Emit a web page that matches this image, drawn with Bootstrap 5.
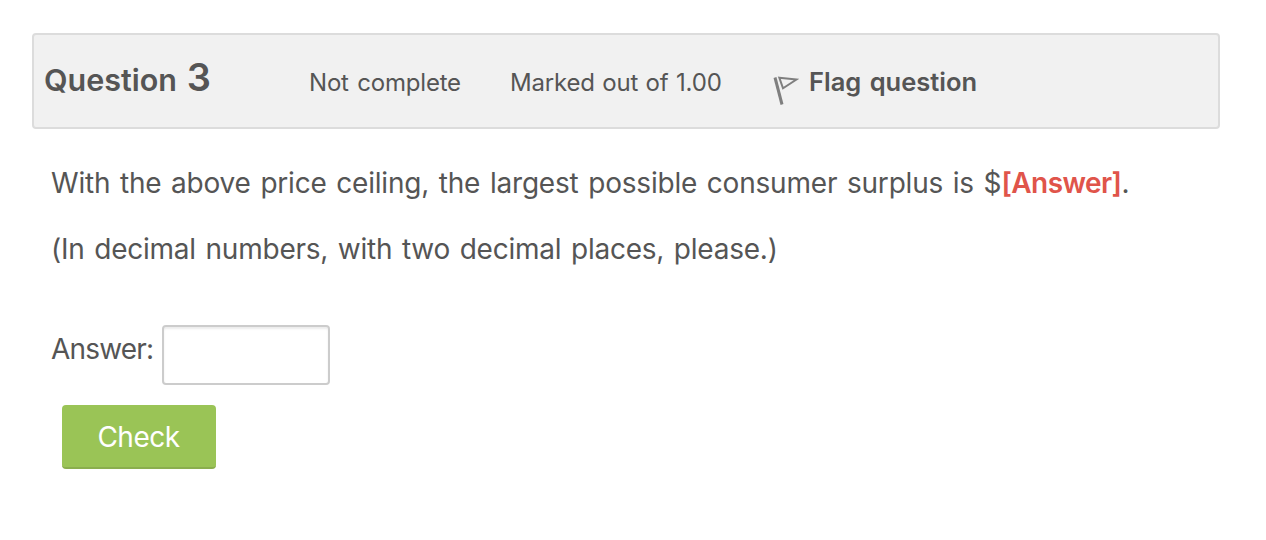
<!DOCTYPE html>
<html lang="en">
<head>
    <meta charset="UTF-8">
    <meta name="viewport" content="width=device-width, initial-scale=1.0">
    <title>Question 3</title>
    <link rel="stylesheet" href="https://cdn.jsdelivr.net/npm/bootstrap@5.3.0/dist/css/bootstrap.min.css">
    <style>
        body {
            font-family: Inter, "Liberation Sans", sans-serif;
            color: #555;
            font-size: 28px;
            line-height: 40px;
            letter-spacing: -.2px;
            word-spacing: 2px;
            white-space: nowrap;
        }
        .question {
            padding: 33px 46px 0 32px;
        }
        .info {
            height: 96px;
            padding-left: 10px;
            background: #f1f1f1;
            border: 2px solid #dcdcdc;
            border-radius: 4px;
            line-height: 30px;
        }
        .info h3 {
            width: 265px;
            padding-bottom: 6px;
            font-size: 30.5px;
            line-height: 36px;
            font-weight: 600;
            letter-spacing: 0;
        }
        .qno {
            font-size: 38px;
        }
        .state {
            width: 201px;
            padding-top: 4px;
            font-size: 24px;
        }
        .grade {
            width: 263px;
            padding-top: 4px;
            font-size: 24px;
            word-spacing: 1px;
        }
        .flag {
            padding-top: 2px;
            color: #555;
            font-size: 25.5px;
            font-weight: 600;
            letter-spacing: 0;
        }
        .flag svg {
            margin: 18px 10px 0 0;
        }
        .flag-text {
            margin-top: -1px;
        }
        .formulation {
            padding: 34px 0 0 19px;
        }
        .formulation p {
            margin-bottom: 26px;
        }
        .blank {
            color: #e0544a;
            font-weight: 600;
            letter-spacing: -.55px;
        }
        .line-two {
            letter-spacing: -.23px;
        }
        .ablock {
            padding-top: 30px;
        }
        .ablock label {
            width: 111px;
            padding-top: 4px;
            letter-spacing: -.8px;
        }
        .ablock .form-control {
            width: 168px;
            height: 60px;
            border: 2px solid #ccc;
            border-radius: 4px;
            box-shadow: inset 0 2px 2px rgba(0, 0, 0, .075);
        }
        .check {
            width: 154px;
            height: 64px;
            margin: 20px 0 0 11px;
            padding: 2px 1px 0 0;
            color: #fff;
            background: #9ac456;
            border: 0;
            border-bottom: 2px solid #8aae4e;
            border-radius: 4px;
            font-size: 28px;
            letter-spacing: -.5px;
        }
    </style>
</head>
<body>
    <div class="question">
        <!-- Question status bar -->
        <div class="info d-flex align-items-center">
            <h3 class="mb-0">Question <span class="qno">3</span></h3>
            <div class="state">Not complete</div>
            <div class="grade">Marked out of 1.00</div>
            <a href="#" class="flag d-flex align-items-center text-decoration-none">
                <svg width="26" height="30" viewBox="0 0 26 30" fill="none" stroke="#7f7f7f">
                    <path d="M2 1.5 9 28.5" stroke-width="3"/>
                    <path d="M6.3 1.7 23.5 3.5 10 12.3Z" stroke-width="2"/>
                </svg>
                <span class="flag-text">Flag question</span>
            </a>
        </div>

        <!-- Question text and answer -->
        <form class="formulation">
            <p class="line-one">With the above price ceiling, the largest possible consumer surplus is $<span class="blank">[Answer]</span>.</p>
            <p class="line-two">(In decimal numbers, with two decimal places, please.)</p>
            <div class="ablock d-flex">
                <label for="answer">Answer:</label>
                <input type="text" id="answer" class="form-control">
            </div>
            <button type="button" class="btn check">Check</button>
        </form>
    </div>

    <script src="https://cdn.jsdelivr.net/npm/bootstrap@5.3.0/dist/js/bootstrap.bundle.min.js"></script>
</body>
</html>
